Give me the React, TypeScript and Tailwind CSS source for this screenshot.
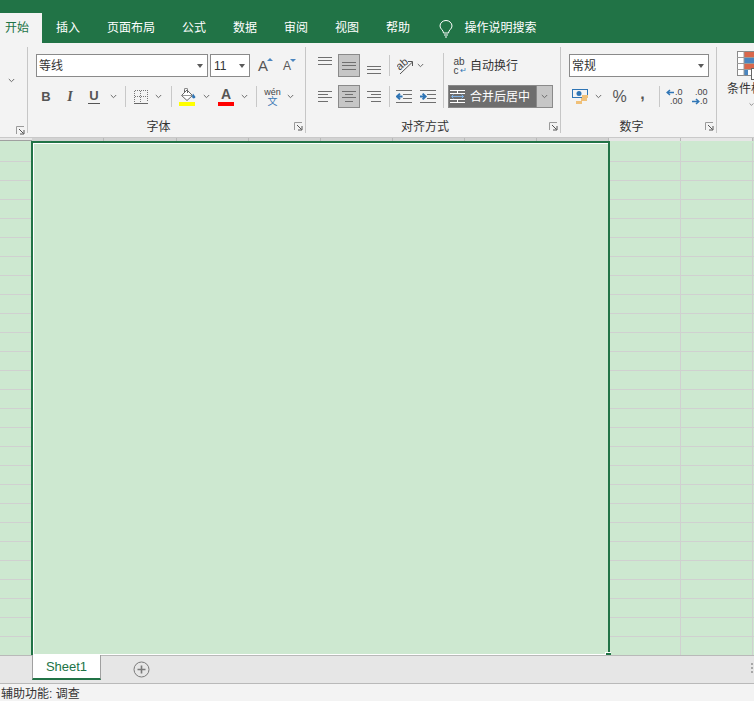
import type { ReactNode } from 'react'

const tabs = ['插入', '页面布局', '公式', '数据', '审阅', '视图', '帮助']
const rows = Array.from({ length: 27 }, (_, i) => i)
const headerCols = [72, 73, 72, 72, 72, 72, 72, 72, 72, 72]

function Chevron() {
  return (
    <svg width="7" height="5" viewBox="0 0 7 5" fill="none" stroke="#6a6a6a" strokeWidth="1">
      <path d="M0.8 1 L3.5 3.7 L6.2 1" />
    </svg>
  )
}

function Caret() {
  return <span className="border-x-[3px] border-t-[4px] border-x-transparent border-t-[#5a5a5a]" />
}

function Launcher() {
  return (
    <svg width="9" height="9" viewBox="0 0 9 9" fill="none" strokeWidth="1">
      <path d="M0.5 8 V0.5 H8" stroke="#9a9a9a" />
      <path d="M3 3 L7.5 7.5 M4 8 H8 V4" stroke="#555" />
    </svg>
  )
}

function Slot({ className, children }: { className: string; children?: ReactNode }) {
  return <div className={`flex shrink-0 items-center justify-center ${className}`}>{children}</div>
}

function Sep({ className }: { className: string }) {
  return (
    <Slot className={className}>
      <span className="h-[21px] w-px bg-[#c8c8c8]" />
    </Slot>
  )
}

// grey lines used by the alignment buttons
function Lines({ widths, align, gap, y = 0 }: { widths: number[]; align: 'l' | 'c' | 'r'; gap: number; y?: number }) {
  return (
    <svg
      width="14"
      height="13"
      viewBox="0 0 14 13"
      stroke="#6f6f6f"
      strokeWidth="1"
      shapeRendering="crispEdges"
      style={{ transform: `translateY(${y}px)` }}
    >
      {widths.map((w, i) => {
        const x = align === 'l' ? 0 : align === 'r' ? 14 - w : (14 - w) / 2
        const ly = Math.floor(i * gap) + 0.5
        return <line key={i} x1={x} x2={x + w} y1={ly} y2={ly} />
      })}
    </svg>
  )
}

function IndentIcon({ flip }: { flip?: boolean }) {
  return (
    <svg width="17" height="14" viewBox="0 0 17 14" fill="none">
      <path d="M0 0.5 H16 M7 4.5 H16 M7 8.5 H16 M0 12.5 H16" stroke="#6f6f6f" />
      {flip ? (
        <path d="M0 6.5 H5 M2.6 3.6 L5.6 6.5 L2.6 9.4" stroke="#2f75b5" strokeWidth="2" />
      ) : (
        <path d="M6.5 6.5 H1.5 M4 3.6 L1 6.5 L4 9.4" stroke="#2f75b5" strokeWidth="2" />
      )}
    </svg>
  )
}

function GroupLabel({ label, className }: { label: string; className: string }) {
  return (
    <div className="relative mt-[11px] flex h-[15px] items-center justify-center text-[12px] text-[#333]">
      <span className={className}>{label}</span>
      <span className="absolute right-[2px] top-[3px] flex">
        <Launcher />
      </span>
    </div>
  )
}

export default function App() {
  return (
    <div className="flex h-[701px] w-[754px] flex-col overflow-hidden bg-[#f3f3f3] font-['Liberation_Sans','Noto_Sans_CJK_SC',sans-serif] text-[12px]">
      {/* Tabs */}
      <div className="flex h-[43px] shrink-0 items-end bg-[#217346] text-white">
        <div className="flex h-[30px] w-[42px] items-center bg-[#f3f3f3] pl-[5px] text-[#217346]">开始</div>
        <div className="flex h-[30px] items-center pl-[0.5px]">
          {tabs.map((t) => (
            <span key={t} className="px-[13.5px]">
              {t}
            </span>
          ))}
          <svg className="ml-[15px] mt-[2px]" width="14" height="18" viewBox="0 0 14 18" fill="none" stroke="#fff" strokeWidth="1">
            <path d="M4.5 13 C4.5 10 1 9 1 6 A6 5.5 0 0 1 13 6 C13 9 9.5 10 9.5 13 Z" />
            <path d="M5 15 H9 M6 17 H8" />
          </svg>
          <span className="ml-[12px]">操作说明搜索</span>
        </div>
      </div>

      {/* Ribbon */}
      <div className="flex h-[94px] shrink-0 bg-[#f3f3f3] pt-[4px] text-[#333]">
        {/* Clipped group */}
        <div className="flex h-[86px] w-[28px] shrink-0 flex-col items-end border-r border-[#c6c6c6] pr-[2px]">
          <div className="mr-[10px] mt-[31px] flex">
            <Chevron />
          </div>
          <div className="mt-[43px] flex">
            <Launcher />
          </div>
        </div>

        {/* Font */}
        <div className="h-[86px] w-[278px] shrink-0 border-r border-[#c6c6c6]">
          <div className="mt-[7px] flex h-[23px] pl-[8px]">
            <div className="flex h-[23px] w-[172px] items-center justify-between border border-[#8a8a8a] bg-white pl-[2px] pr-[4px]">
              <span>等线</span>
              <Caret />
            </div>
            <div className="ml-[2px] flex h-[23px] w-[40px] items-center justify-between border border-[#8a8a8a] bg-white pl-[3px] pr-[4px]">
              <span>11</span>
              <Caret />
            </div>
            <Slot className="ml-[4px] w-[18px]">
              <span className="relative text-[15px] leading-none text-[#555]">
                A
                <span className="absolute -right-[5px] top-0 border-x-[3px] border-b-[3px] border-x-transparent border-b-[#4a86c0]" />
              </span>
            </Slot>
            <Slot className="ml-[6px] w-[18px]">
              <span className="relative text-[12px] leading-none text-[#555]">
                A
                <span className="absolute -right-[5px] -top-[1px] border-x-[3px] border-t-[3px] border-x-transparent border-t-[#4a86c0]" />
              </span>
            </Slot>
          </div>
          <div className="mt-[8px] flex h-[23px] pl-[6px] text-[#555]">
            <Slot className="w-[24px] text-[13px] font-bold">B</Slot>
            <Slot className="w-[24px] font-['Liberation_Serif',serif] text-[14px] font-bold italic">I</Slot>
            <Slot className="w-[24px] text-[13px] font-bold">
              <span className="border-b border-[#555] px-[1px] leading-[14px]">U</span>
            </Slot>
            <Slot className="w-[14px]">
              <Chevron />
            </Slot>
            <Sep className="w-[11px]" />
            <Slot className="w-[19px]">
              <svg width="14" height="14" viewBox="0 0 14 14" fill="none" shapeRendering="crispEdges">
                <path d="M0.5 0.5 H13.5 V12 M0.5 0.5 V12 M6.5 0.5 V12 M0.5 6.5 H13.5" stroke="#777" strokeDasharray="1 1" />
                <path d="M0 13.5 H14" stroke="#666" />
              </svg>
            </Slot>
            <Slot className="w-[17px]">
              <Chevron />
            </Slot>
            <Sep className="w-[8px]" />
            <Slot className="w-[23px] pl-[1px]">
              <svg width="17" height="18" viewBox="0 0 17 18" fill="none">
                <path d="M8 2 L13.5 7.5 L8 12.5 L2.5 7.5 Z" stroke="#666" fill="#fff" />
                <path d="M2.5 7.5 H13.5" stroke="#999" />
                <path d="M5.5 5 V1.5 A1.5 1.5 0 0 1 8.5 1.5 V5" stroke="#666" />
                <path d="M14 5.5 L16.5 9 A1.8 1.8 0 0 1 13 9 Z" fill="#2f75b5" />
                <rect x="0" y="14" width="16" height="4" fill="#ffff00" />
              </svg>
            </Slot>
            <Slot className="w-[16px]">
              <Chevron />
            </Slot>
            <Slot className="w-[24px]">
              <span className="flex flex-col items-center">
                <span className="text-[14px] font-bold leading-[13px] text-[#555]">A</span>
                <span className="mt-[1px] h-[4px] w-[16px] bg-[#ff0000]" />
              </span>
            </Slot>
            <Slot className="w-[12px]">
              <Chevron />
            </Slot>
            <Sep className="w-[12px]" />
            <Slot className="w-[21px]">
              <span className="flex flex-col items-center text-[9px] leading-[9px]">
                <span className="text-[#444]">wén</span>
                <span className="text-[10px] text-[#3c78b4]">文</span>
              </span>
            </Slot>
            <Slot className="w-[14px]">
              <Chevron />
            </Slot>
          </div>
          <GroupLabel label="字体" className="mr-[16px]" />
        </div>

        {/* Alignment */}
        <div className="h-[86px] w-[255px] shrink-0 border-r border-[#c6c6c6]">
          <div className="mt-[7px] flex h-[23px] pl-[6px]">
            <Slot className="w-[26px]">
              <Lines widths={[14, 14, 14]} align="l" gap={3.5} y={-2} />
            </Slot>
            <Slot className="h-[23px] w-[22px] border border-[#8a8a8a] bg-[#c6c6c6]">
              <Lines widths={[14, 14, 14]} align="l" gap={3.5} y={3} />
            </Slot>
            <Slot className="w-[28px]">
              <Lines widths={[14, 14, 14]} align="l" gap={3.5} y={7} />
            </Slot>
            <Sep className="w-[2px]" />
            <Slot className="ml-[6px] w-[20px]">
              <svg width="18" height="18" viewBox="0 0 18 18" fill="none">
                <text x="0" y="11" fontSize="11" fill="#444" transform="rotate(-40 5 9)" fontFamily="Liberation Sans">
                  ab
                </text>
                <path d="M3 17 L15 5.5 M11 4.5 H15.5 V9" stroke="#555" />
              </svg>
            </Slot>
            <Slot className="w-[8px]">
              <Chevron />
            </Slot>
            <div className="-mt-px ml-[19px] h-[55px] w-px shrink-0 bg-[#c8c8c8]" />
            <Slot className="ml-[9px] w-[14px]">
              <span className="flex flex-col text-[10px] leading-[9px] text-[#444]">
                <span>ab</span>
                <span className="flex items-center">
                  c<span className="ml-[1px] text-[8px] text-[#2f75b5]">↵</span>
                </span>
              </span>
            </Slot>
            <span className="ml-[3px] flex items-center text-[12px]">自动换行</span>
          </div>
          <div className="mt-[8px] flex h-[23px] pl-[6px]">
            <Slot className="w-[26px]">
              <Lines widths={[14, 10, 14, 10]} align="l" gap={3.4} y={1} />
            </Slot>
            <Slot className="h-[23px] w-[22px] border border-[#8a8a8a] bg-[#c6c6c6]">
              <Lines widths={[14, 8, 14, 8]} align="c" gap={3.4} y={1} />
            </Slot>
            <Slot className="w-[28px]">
              <Lines widths={[14, 10, 14, 10]} align="r" gap={3.4} y={1} />
            </Slot>
            <Sep className="w-[2px]" />
            <Slot className="ml-[5px] w-[18px]">
              <IndentIcon />
            </Slot>
            <Slot className="ml-[6px] w-[18px]">
              <IndentIcon flip />
            </Slot>
            <div className="ml-[11px] flex h-[23px] w-[105px] items-center border border-[#8a8a8a] bg-[#6e6e6e] text-white">
              <div className="flex w-[21px] shrink-0 pl-px">
                <svg width="15" height="13" viewBox="0 0 15 13" fill="none" shapeRendering="crispEdges">
                  <path d="M0 0.5 H15 M0 3.5 H15 M0 9.5 H15 M0 12.5 H15" stroke="#fff" />
                  <path d="M7.5 0 V3 M7.5 10 V13" stroke="#fff" />
                  <path d="M1.5 6.5 H13.5" stroke="#7fb2e5" />
                  <path d="M3.5 4.5 L1.5 6.5 L3.5 8.5 M11.5 4.5 L13.5 6.5 L11.5 8.5" stroke="#7fb2e5" shapeRendering="auto" />
                </svg>
              </div>
              <span className="text-[12px]">合并后居中</span>
              <Slot className="ml-auto h-full w-[16px] border-l border-[#8a8a8a] bg-[#c6c6c6]">
                <Chevron />
              </Slot>
            </div>
          </div>
          <GroupLabel label="对齐方式" className="mr-[16px]" />
        </div>

        {/* Number */}
        <div className="h-[86px] w-[156px] shrink-0 border-r border-[#c6c6c6]">
          <div className="mt-[7px] flex h-[23px] pl-[8px]">
            <div className="flex h-[23px] w-[140px] items-center justify-between border border-[#8a8a8a] bg-white pl-[2px] pr-[4px]">
              <span>常规</span>
              <Caret />
            </div>
          </div>
          <div className="mt-[8px] flex h-[23px] pl-[9px] text-[#555]">
            <Slot className="w-[20px]">
              <svg width="17" height="16" viewBox="0 0 17 16" fill="none">
                <rect x="0.5" y="0.5" width="15" height="8" stroke="#2f75b5" />
                <circle cx="7" cy="4.5" r="2.5" fill="#2f75b5" />
                <rect x="10" y="6" width="6" height="3" fill="#f0c078" />
                <rect x="9" y="9" width="6" height="3" fill="#f0c078" />
                <rect x="4" y="12" width="6" height="3" fill="#f0c078" />
              </svg>
            </Slot>
            <Slot className="w-[16px]">
              <Chevron />
            </Slot>
            <Slot className="ml-[5px] w-[17px] text-[16px]">%</Slot>
            <Slot className="ml-[6px] w-[17px] -translate-y-[3px] text-[16px] font-bold">,</Slot>
            <Sep className="ml-[7px] w-[2px]" />
            <Slot className="ml-[5px] w-[18px]">
              <span className="relative flex h-[18px] w-[17px] flex-col items-end text-[9px] leading-[9px] text-[#444]">
                <span>.0</span>
                <span>.00</span>
                <svg className="absolute left-0 top-[1px]" width="9" height="7" viewBox="0 0 9 7" fill="none" stroke="#2f75b5" strokeWidth="1.5">
                  <path d="M8 3.5 H1.5 M4 1 L1.2 3.5 L4 6" />
                </svg>
              </span>
            </Slot>
            <Slot className="ml-[7px] w-[18px]">
              <span className="relative flex h-[18px] w-[17px] flex-col items-end text-[9px] leading-[9px] text-[#444]">
                <span>.00</span>
                <span>.0</span>
                <svg className="absolute bottom-[1px] left-0" width="9" height="7" viewBox="0 0 9 7" fill="none" stroke="#2f75b5" strokeWidth="1.5">
                  <path d="M1 3.5 H7.5 M5 1 L7.8 3.5 L5 6" />
                </svg>
              </span>
            </Slot>
          </div>
          <GroupLabel label="数字" className="mr-[14px]" />
        </div>

        {/* Styles, cut off by the window */}
        <div className="h-[86px] flex-1 overflow-hidden pl-[10px]">
          <div className="ml-[10px] mt-[4px]">
            <svg className="block" width="20" height="29" viewBox="0 0 20 29" fill="none">
              <rect x="0.5" y="0.5" width="18" height="24" fill="#fff" stroke="#8a8a8a" />
              <rect x="7" y="1" width="12" height="5" fill="#d9674b" />
              <rect x="7" y="7" width="12" height="5" fill="#4a86c0" />
              <rect x="7" y="13" width="12" height="5" fill="#d9674b" />
              <rect x="7" y="19" width="4" height="5" fill="#4a86c0" />
              <path d="M7 0 V25 M0 6.5 H19 M0 12.5 H19 M0 18.5 H19" stroke="#9a9a9a" />
              <rect x="14.5" y="17.5" width="8" height="11" fill="#fff" stroke="#666" />
            </svg>
          </div>
          <div className="mt-[2px] whitespace-nowrap text-[12px] leading-[15px]">条件格式</div>
          <div className="ml-[22px] mt-[5px] flex">
            <Chevron />
          </div>
        </div>
      </div>

      {/* Column headers, only a sliver of them is visible */}
      <div className="flex h-[4px] shrink-0 border-t border-[#c9c9c9] bg-[#d2d2d2]">
        <div className="h-full w-[32px] shrink-0 border-b border-[#a0a0a0] bg-[#e6e6e6]" />
        {headerCols.map((w, i) => (
          <div
            key={i}
            className={`h-full shrink-0 border-r border-[#b8b8b8] ${i >= 8 ? 'bg-[#e6e6e6]' : 'bg-[#d2d2d2]'}`}
            style={{ width: w }}
          />
        ))}
      </div>

      {/* Sheet */}
      <div className="relative min-h-0 flex-1 overflow-hidden bg-[#cde8d0] pt-[2px]">
        {rows.map((r) => (
          <div key={r} className="flex h-[19px] border-b border-[#d0d0d0]">
            <div className="w-[32px] shrink-0" />
            {headerCols.map((w, i) => (
              <div key={i} className="shrink-0 border-r border-[#d0d0d0]" style={{ width: w }} />
            ))}
          </div>
        ))}
        {/* Selection */}
        <div className="absolute bottom-0 left-[31px] top-0 w-[579px] border-x-2 border-t-2 border-[#217346] bg-[#cde8d0]">
          <div className="h-full w-full border-b border-l border-t border-white" />
        </div>
        <div className="absolute bottom-0 left-[605px] h-[3px] w-[6px] border-l border-t border-white bg-[#217346]" />
      </div>

      {/* Sheet tabs */}
      <div className="flex h-[29px] shrink-0 border-y border-[#b9b9b9] bg-[#e6e6e6]">
        <div className="-mt-px ml-[32px] flex h-[25px] w-[69px] items-center justify-center border-x border-b-2 border-[#a0a0a0] border-b-[#217346] bg-white text-[13px] text-[#217346]">
          Sheet1
        </div>
        <svg className="ml-[32px] mt-[5px]" width="17" height="17" viewBox="0 0 17 17" fill="none" stroke="#7a7a7a">
          <circle cx="8.5" cy="8.5" r="7.5" />
          <path d="M8.5 4.5 V12.5 M4.5 8.5 H12.5" strokeWidth="1.6" />
        </svg>
        <div className="ml-auto mr-[1px] mt-[7px] flex flex-col gap-[2px]">
          <span className="h-[2px] w-[2px] bg-[#a8a8a8]" />
          <span className="h-[2px] w-[2px] bg-[#a8a8a8]" />
          <span className="h-[2px] w-[2px] bg-[#a8a8a8]" />
        </div>
      </div>

      {/* Status bar */}
      <div className="flex h-[17px] shrink-0 items-center bg-[#f3f3f3] pl-px pt-[3px] text-[12px] text-[#333]">辅助功能: 调查</div>
    </div>
  )
}
